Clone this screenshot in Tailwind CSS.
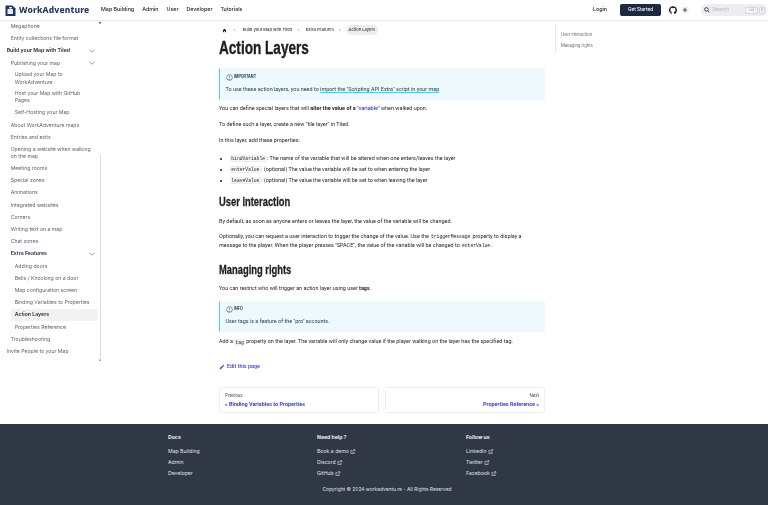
<!DOCTYPE html>
<html><head><meta charset="utf-8"><script src="https://cdn.jsdelivr.net/npm/@tailwindcss/browser@4"></script></head>
<body class="bg-white font-['Inter',sans-serif] text-[5.15px] text-[#1c1e21] overflow-hidden">
<div class="w-[768px] h-[505px] flex flex-col overflow-hidden blur-[0.3px]">
<header class="h-[20px] shrink-0 flex items-center pl-[5px] pr-[1px] bg-white shadow-[0_1px_2px_rgba(0,0,0,0.1)] relative z-10">
  <svg class="w-[11px] h-[13px] mr-[3px]" viewBox="0 0 22 26"><path d="M1 3h14l6 6v15H1z" fill="#1f3557"/><rect x="5" y="10" width="11" height="10" rx="1" fill="#e8ecf2"/><rect x="8" y="6" width="6" height="3" fill="#e8ecf2"/></svg>
  <span class="text-[8.5px] font-extrabold text-[#1f3557] tracking-[0.15px] w-[82px] font-['Noto_Sans',sans-serif]">WorkAdventure</span>
  <nav class="flex gap-[8px] text-[5.33px] font-medium text-[#1c1e21]"><span>Map Building</span><span>Admin</span><span>User</span><span>Developer</span><span>Tutorials</span></nav>
  <div class="ml-auto flex items-center">
    <span class="font-medium text-[5.33px] mr-[13px]">Login</span>
    <span class="w-[41px] h-[12px] rounded-[2px] bg-[#1b2a41] text-white text-[4.600px] flex items-center justify-center font-medium mr-[8px]">Get Started</span>
    <svg class="w-[8px] h-[8px] mr-[4px]" viewBox="0 0 24 24" fill="#1c1e21"><path d="M12 .5a12 12 0 0 0-3.8 23.4c.6.1.8-.3.8-.6v-2c-3.3.7-4-1.6-4-1.6-.6-1.4-1.4-1.8-1.4-1.8-1.1-.7.1-.7.1-.7 1.2.1 1.8 1.2 1.8 1.2 1.1 1.8 2.8 1.3 3.5 1 .1-.8.4-1.3.8-1.6-2.7-.3-5.5-1.3-5.5-5.9 0-1.3.5-2.4 1.2-3.2-.1-.3-.5-1.5.1-3.2 0 0 1-.3 3.3 1.2a11.500 11.500 0 0 1 6 0c2.300-1.500 3.300-1.200 3.300-1.200.6 1.700.2 2.900.1 3.200.8.8 1.200 1.900 1.200 3.200 0 4.600-2.800 5.600-5.500 5.900.4.400.8 1.100.8 2.200v3.300c0 .3.2.7.8.6A12 12 0 0 0 12 .5z"/></svg>
    <svg class="w-[8px] h-[8px] mr-[12px]" viewBox="0 0 24 24" fill="#777" stroke="#999" stroke-width="1.500"><circle cx="12" cy="12" r="5"/><path d="M12 1v4M12 19v4M1 12h4M19 12h4M4 4l3 3M17 17l3 3M4 20l3-3M17 7l3-3"/></svg>
    <div class="w-[66px] h-[12px] rounded-[6px] bg-[#ebedf0] flex items-center pl-[3px] pr-[2px]">
      <svg class="w-[6px] h-[6px]" viewBox="0 0 20 20" fill="none" stroke="#1c1e21" stroke-width="2.500"><circle cx="8" cy="8" r="6"/><path d="M12.500 12.500 18 18"/></svg>
      <span class="ml-[2px] text-[#b5bac1]">Search</span>
      <span class="ml-auto flex gap-[1px]"><span class="w-[13px] h-[7px] rounded-[1px] bg-[#f3f4f6] border border-[#d6d9de] text-[3.500px] leading-[5px] text-center text-[#969faf]">ctrl</span><span class="w-[6px] h-[7px] rounded-[1px] bg-[#f3f4f6] border border-[#d6d9de] text-[3.500px] leading-[5px] text-center text-[#969faf]">K</span></span>
    </div>
  </div>
</header>
<div class="h-[404px] shrink-0 flex">
  <aside class="w-[101px] shrink-0 h-[342px] relative text-[#606770] leading-[7.200px] overflow-hidden">
    <svg class="absolute right-[-1px] top-[1px] w-[4px] h-[3px]" viewBox="0 0 8 6"><path d="M4 1 7 5H1z" fill="#505050"/></svg>
    <div class="absolute right-0 top-[135px] bottom-[3px] w-[1px] bg-[#d3e0ec]"></div>
    <svg class="absolute right-[-1px] bottom-0 w-[4px] h-[3px]" viewBox="0 0 8 6"><path d="M4 5 7 1H1z" fill="#a0a0a0"/></svg>
    <div class="flex flex-col pl-[2.700px] pr-[3px] pt-[0.500px] gap-[0.330px]">
      <a class="h-[11.900px] flex items-center pl-[8px]">Megaphone</a>
      <a class="h-[11.900px] flex items-center pl-[8px]">Entity collections file format</a>
      <a class="h-[11.900px] flex items-center pl-[4px] justify-between pr-[3px] font-bold text-[#3a4350]">Build your Map with Tiled<svg class="w-[6px] h-[4px]" viewBox="0 0 12 8" fill="none" stroke="#606770" stroke-width="1.300"><path d="M1 1.500l5 5 5-5"/></svg></a>
      <a class="h-[11.900px] flex items-center pl-[8px] justify-between pr-[3px]">Publishing your map<svg class="w-[6px] h-[4px]" viewBox="0 0 12 8" fill="none" stroke="#606770" stroke-width="1.300"><path d="M1 1.500l5 5 5-5"/></svg></a>
      <a class="h-[18.500px] flex items-center pl-[12px] pr-[4px]">Upload your Map to WorkAdventure</a>
      <a class="h-[18.500px] flex items-center pl-[12px] pr-[4px]">Host your Map with GitHub Pages</a>
      <a class="h-[11.900px] flex items-center pl-[12px]">Self-Hosting your Map</a>
      <a class="h-[11.900px] flex items-center pl-[8px]">About WorkAdventure maps</a>
      <a class="h-[11.900px] flex items-center pl-[8px]">Entries and exits</a>
      <a class="h-[18.500px] flex items-center pl-[8px] pr-[4px]">Opening a website when walking on the map</a>
      <a class="h-[11.900px] flex items-center pl-[8px]">Meeting rooms</a>
      <a class="h-[11.900px] flex items-center pl-[8px]">Special zones</a>
      <a class="h-[11.900px] flex items-center pl-[8px]">Animations</a>
      <a class="h-[11.900px] flex items-center pl-[8px]">Integrated websites</a>
      <a class="h-[11.900px] flex items-center pl-[8px]">Corners</a>
      <a class="h-[11.900px] flex items-center pl-[8px]">Writing text on a map</a>
      <a class="h-[11.900px] flex items-center pl-[8px]">Chat zones</a>
      <a class="h-[11.900px] flex items-center pl-[8px] justify-between pr-[3px] font-bold text-[#3a4350]">Extra Features<svg class="w-[6px] h-[4px]" viewBox="0 0 12 8" fill="none" stroke="#606770" stroke-width="1.300"><path d="M1 1.500l5 5 5-5"/></svg></a>
      <a class="h-[11.900px] flex items-center pl-[12px]">Adding doors</a>
      <a class="h-[11.900px] flex items-center pl-[12px]">Bells / Knocking on a door</a>
      <a class="h-[11.900px] flex items-center pl-[12px]">Map configuration screen</a>
      <a class="h-[11.900px] flex items-center pl-[12px]">Binding Variables to Properties</a>
      <a class="h-[11.900px] flex items-center ml-[8px] pl-[4px] rounded-[1.500px] bg-[#f2f2f2] font-bold text-[#3a4350]">Action Layers</a>
      <a class="h-[11.900px] flex items-center pl-[12px]">Properties Reference</a>
      <a class="h-[11.900px] flex items-center pl-[8px]">Troubleshooting</a>
      <a class="h-[11.900px] flex items-center pl-[4px]">Invite People to your Map</a>
    </div>
  </aside>
  <main class="w-[454px] shrink-0 pl-[118px] pr-[10px] font-['Roboto',sans-serif] text-[5.45px] text-[#1c1e21]">
    <div class="flex items-center h-[13px] mt-[3.500px] text-[4.100px] text-[#3c4148] font-medium font-['Inter',sans-serif]">
      <svg class="w-[5px] h-[5px] ml-[3px]" viewBox="0 0 24 24" fill="#1c1e21"><path d="M10 20v-6h4v6h5v-8h3L12 3 2 12h3v8z"/></svg>
      <span class="ml-[7px] mr-[7px] text-[#888]">›</span><span>Build your Map with Tiled</span>
      <span class="mx-[6px] text-[#888]">›</span><span>Extra Features</span>
      <span class="mx-[5px] text-[#888]">›</span><span class="bg-[#ebedf0] rounded-[5px] px-[3px] py-[2px]">Action Layers</span>
    </div>
    <h1 class="font-['Liberation_Sans',sans-serif] font-bold text-[18px] leading-[19px] mt-[2.500px] scale-x-[0.755] origin-left whitespace-nowrap text-[#1c1e21] [-webkit-text-stroke:0.35px_#1c1e21]">Action Layers</h1>
    <div class="mt-[10px] h-[32px] bg-[#eef9fd] border-l-[1.500px] border-[#54c7ec] rounded-[1.500px] pl-[5.500px] pt-[6px]">
      <div class="flex items-center text-[4.300px] font-bold text-[#193c47] font-['Inter',sans-serif]"><svg class="w-[7px] h-[7px] mr-[1.500px]" viewBox="0 0 16 16" fill="none" stroke="#193c47" stroke-width="1.200"><circle cx="8" cy="8" r="6.500"/><path d="M8 4v5M6.500 12h3"/></svg><span class="-mt-[1.500px] scale-x-[0.85] origin-left">IMPORTANT</span></div>
      <p class="mt-[4px] text-[#193c47]">To use these action layers, you need to <span class="underline decoration-[#54c7ec]">import the "Scripting API Extra" script in your map</span></p>
    </div>
    <p class="mt-[4px] leading-[9px]">You can define special layers that will <b>alter the value of a</b> <span class="text-[#3b3fd8] font-medium">"variable"</span> when walked upon.</p>
    <p class="mt-[7px] leading-[9px]">To define such a layer, create a new "tile layer" in Tiled.</p>
    <p class="mt-[7px] leading-[9px]">In this layer, add these properties:</p>
    <ul class="mt-[7.500px] pl-[10.500px] list-disc leading-[10px]">
      <li><code class="font-['Liberation_Mono',monospace] text-[4.700px] bg-[#f6f7f8] border border-[#eceef0] rounded-[1px] px-[0.800px]">bindVariable</code>: The name of the variable that will be altered when one enters/leaves the layer</li>
      <li><code class="font-['Liberation_Mono',monospace] text-[4.700px] bg-[#f6f7f8] border border-[#eceef0] rounded-[1px] px-[0.800px]">enterValue</code>: (optional) The value the variable will be set to when entering the layer</li>
      <li><code class="font-['Liberation_Mono',monospace] text-[4.700px] bg-[#f6f7f8] border border-[#eceef0] rounded-[1px] px-[0.800px]">leaveValue</code>: (optional) The value the variable will be set to when leaving the layer</li>
    </ul>
    <h2 class="font-['Liberation_Sans',sans-serif] font-bold text-[13px] leading-[14px] mt-[9px] scale-x-[0.72] origin-left whitespace-nowrap [-webkit-text-stroke:0.3px_#1c1e21]">User interaction</h2>
    <p class="mt-[8.500px] leading-[9px]">By default, as soon as anyone enters or leaves the layer, the value of the variable will be changed.</p>
    <p class="mt-[5.500px] leading-[9.500px]">Optionally, you can request a user interaction to trigger the change of the value. Use the <code class="font-['Liberation_Mono',monospace] text-[4.700px] bg-[#f6f7f8] rounded-[1px] px-[0.800px]">triggerMessage</code> property to display a message to the player. When the player presses "SPACE", the value of the variable will be changed to <code class="font-['Liberation_Mono',monospace] text-[4.700px] bg-[#f6f7f8] rounded-[1px] px-[0.800px]">enterValue</code>.</p>
    <h2 class="font-['Liberation_Sans',sans-serif] font-bold text-[13px] leading-[14px] mt-[12px] scale-x-[0.72] origin-left whitespace-nowrap [-webkit-text-stroke:0.3px_#1c1e21]">Managing rights</h2>
    <p class="mt-[7px] leading-[9px]">You can restrict who will trigger an action layer using user <b>tags</b>.</p>
    <div class="mt-[8px] h-[31px] bg-[#eef9fd] border-l-[1.500px] border-[#54c7ec] rounded-[1.500px] pl-[5.500px] pt-[5.500px]">
      <div class="flex items-center text-[4.300px] font-bold text-[#193c47] font-['Inter',sans-serif]"><svg class="w-[7px] h-[7px] mr-[1.500px]" viewBox="0 0 16 16" fill="none" stroke="#193c47" stroke-width="1.200"><circle cx="8" cy="8" r="6.500"/><path d="M8 4v5M6.500 12h3"/></svg><span class="-mt-[1.500px] scale-x-[0.85] origin-left">INFO</span></div>
      <p class="mt-[3.500px] text-[#193c47]">User tags is a feature of the "pro" accounts.</p>
    </div>
    <p class="mt-[5px] leading-[9px]">Add a <code class="font-['Liberation_Mono',monospace] text-[4.700px] bg-[#f2f3f4] rounded-[2px] px-[1px] py-[1px] align-[-1.500px]">tag</code> property on the layer. The variable will only change value if the player walking on the layer has the specified tag.</p>
    <div class="mt-[15px] flex items-center text-[#3b3fd8] font-medium h-[9px]"><svg class="w-[6px] h-[6px] mr-[2px]" viewBox="0 0 24 24" fill="#3b3fd8"><path d="M3 17.250V21h3.750L17.810 9.940l-3.750-3.750zM20.710 7.040a1 1 0 0 0 0-1.410l-2.340-2.340a1 1 0 0 0-1.410 0l-1.830 1.830 3.750 3.750z"/></svg>Edit this page</div>
    <div class="mt-[15.500px] grid grid-cols-2 gap-[5.500px]">
      <div class="h-[26px] border border-[#edeef0] rounded-[1.500px] px-[5px] pt-[5px]"><div class="text-[4.600px] text-[#525860]">Previous</div><div class="mt-[1px] text-[#3b3fd8] font-bold">« Binding Variables to Properties</div></div>
      <div class="h-[26px] border border-[#edeef0] rounded-[1.500px] px-[5px] pt-[5px] text-right"><div class="text-[4.600px] text-[#525860]">Next</div><div class="mt-[1px] text-[#3b3fd8] font-bold">Properties Reference »</div></div>
    </div>
  </main>
  <div class="flex-1 pt-[5px]">
    <div class="border-l border-[#e3e5e8] h-[28px] pl-[5px] pt-[7px] text-[4.150px] text-[#606770] flex flex-col gap-[4.800px]"><span>User interaction</span><span>Managing rights</span></div>
  </div>
</div>
<footer class="h-[81px] shrink-0 bg-[#303846] text-[#dfe2e6] pl-[168px] pr-[153px] pt-[10px] relative">
  <div class="grid grid-cols-3">
    <div><div class="font-bold h-[7px] leading-[7px] mb-[7px] text-[#ebedf0]">Docs</div><div class="flex flex-col gap-[4px] leading-[7px]"><span>Map Building</span><span>Admin</span><span>Developer</span></div></div>
    <div><div class="font-bold h-[7px] leading-[7px] mb-[7px] text-[#ebedf0]">Need help ?</div><div class="flex flex-col gap-[4px] leading-[7px]"><span>Book a demo <svg class="inline w-[5.500px] h-[5.500px]" viewBox="0 0 24 24" fill="none" stroke="#ebedf0" stroke-width="2.500"><path d="M18 13v7H4V6h7M14 3h7v7M21 3 10 14"/></svg></span><span>Discord <svg class="inline w-[5.500px] h-[5.500px]" viewBox="0 0 24 24" fill="none" stroke="#ebedf0" stroke-width="2.500"><path d="M18 13v7H4V6h7M14 3h7v7M21 3 10 14"/></svg></span><span>GitHub <svg class="inline w-[5.500px] h-[5.500px]" viewBox="0 0 24 24" fill="none" stroke="#ebedf0" stroke-width="2.500"><path d="M18 13v7H4V6h7M14 3h7v7M21 3 10 14"/></svg></span></div></div>
    <div><div class="font-bold h-[7px] leading-[7px] mb-[7px] text-[#ebedf0]">Follow us</div><div class="flex flex-col gap-[4px] leading-[7px]"><span>LinkedIn <svg class="inline w-[5.500px] h-[5.500px]" viewBox="0 0 24 24" fill="none" stroke="#ebedf0" stroke-width="2.500"><path d="M18 13v7H4V6h7M14 3h7v7M21 3 10 14"/></svg></span><span>Twitter <svg class="inline w-[5.500px] h-[5.500px]" viewBox="0 0 24 24" fill="none" stroke="#ebedf0" stroke-width="2.500"><path d="M18 13v7H4V6h7M14 3h7v7M21 3 10 14"/></svg></span><span>Facebook <svg class="inline w-[5.500px] h-[5.500px]" viewBox="0 0 24 24" fill="none" stroke="#ebedf0" stroke-width="2.500"><path d="M18 13v7H4V6h7M14 3h7v7M21 3 10 14"/></svg></span></div></div>
  </div>
  <div class="text-center text-[4.900px] mt-[9px] pr-[9px] leading-[7px]">Copyright © 2024 workadventu.re - All Rights Reserved</div>
</footer>
</div>
</body></html>
